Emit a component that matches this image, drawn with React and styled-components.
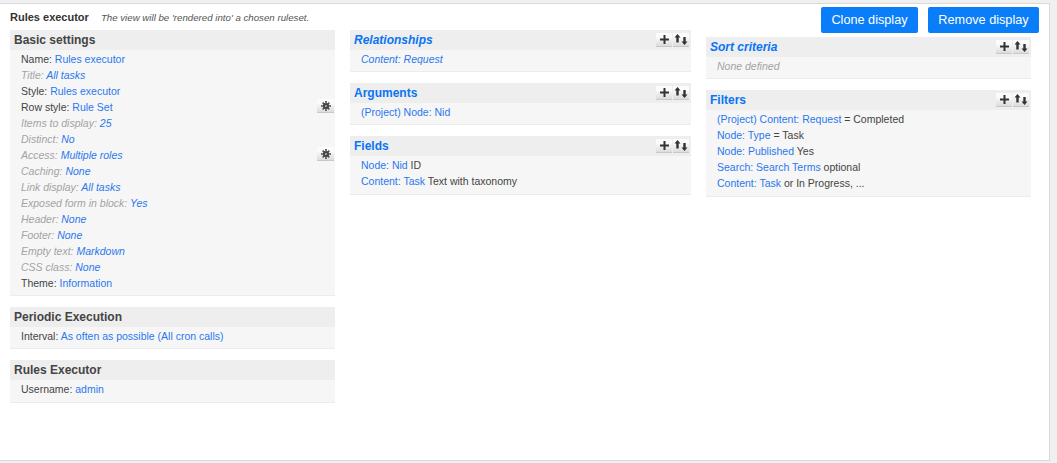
import React from 'react';
import styled, { createGlobalStyle } from 'styled-components';

const Global = createGlobalStyle`
  html, body { margin: 0; padding: 0; background: #f0f0f0; }
  body { font-family: "Liberation Sans", Arial, sans-serif; font-size: 10.5px; color: #444; -webkit-font-smoothing: antialiased; }
`;
const Page = styled.div`
  width: 1057px; height: 463px; box-sizing: border-box; padding: 3px 7px 2px 0; overflow: hidden;
`;
const Sheet = styled.div`
  height: 458px; box-sizing: border-box; background: #fff;
  border-top: 1px solid #d9d9d9; border-bottom: 1px solid #d9d9d9; border-right: 1px solid #d9d9d9;
  display: grid; grid-template-columns: 325px 341px 325px; column-gap: 15px;
  grid-template-rows: 26px 1fr; padding-left: 10px; align-content: start;
`;
const TitleRow = styled.div`
  grid-column: 1 / 3; grid-row: 1; display: flex; align-items: baseline; gap: 12px; padding-top: 7px;
`;
const ViewName = styled.strong`
  font-size: 11px; color: #333; line-height: 13px;
`;
const ViewNote = styled.em`
  font-size: 9.7px; color: #555; line-height: 13px;
`;
const Column = styled.div`
  display: flex; flex-direction: column; gap: 11px; grid-row: 2;
`;
const SideColumn = styled(Column)`
  grid-column: 3; grid-row: 1 / 3; gap: 11px;
`;
const Actions = styled.div`
  display: flex; justify-content: flex-end; gap: 10px; margin: 3px -8px -7px 0;
`;
const Action = styled.button`
  height: 26px; width: ${p => p.$w}px; border: 0; border-radius: 2px; background: #0a7df8; color: #fff;
  font: 12.7px "Liberation Sans", Arial, sans-serif; padding: 0;
`;
const Panel = styled.section`
  background: #f6f6f6; border-bottom: 1px solid #ececec; padding-bottom: ${p => p.$pb ?? 4}px;
`;
const PanelHead = styled.header`
  height: 20px; background: #eeeeee; display: flex; align-items: flex-start; padding: 0 2px 0 4px; justify-content: space-between;
`;
const PanelTitle = styled.h3`
  margin: 0; font-size: 12px; line-height: 20px; font-weight: bold;
  color: ${p => (p.$link ? '#0a74f5' : '#444')};
  font-style: ${p => (p.$italic ? 'italic' : 'normal')};
`;
const Tools = styled.div`
  display: flex; gap: 1px; margin-top: 3px;
`;
const Tool = styled.span`
  width: 16px; height: 13px; display: flex; align-items: center; justify-content: center;
  background: linear-gradient(#fbfbfb 30%, #dcdcdc); border-bottom: 1px solid #c8c8c8;
`;
const Rows = styled.div`
  padding: 1px 0 0 11px;
`;
const Row = styled.div`
  position: relative; height: 16px; line-height: 16px; white-space: nowrap;
  color: ${p => (p.$muted ? '#a3a3a3' : '#444')};
  font-style: ${p => (p.$muted ? 'italic' : 'normal')};
`;
const Link = styled.a`
  color: #2a78ee;
`;
const GearTool = styled(Tool)`
  position: absolute; right: 1px; top: 0; width: 17px;
`;

const Plus = () => (
  <svg width="9" height="9" viewBox="0 0 9 9"><path d="M3.5 0h2v3.5H9v2H5.5V9h-2V5.5H0v-2h3.5z" fill="#333" /></svg>
);
const Arrows = () => (
  <svg width="14" height="11" viewBox="0 0 14 11"><path d="M3.5 0l3 3.6H4.7V8.5H2.3V3.6H.5zM10.5 11L7.5 7.4h1.8V3h2.4v4.4h1.8z" fill="#333" /></svg>
);
const Gear = () => (
  <svg width="10" height="10" viewBox="0 0 11 11">
    <circle cx="5.5" cy="5.5" r="3.1" fill="#444" stroke="#444" strokeWidth="1" />
    <circle cx="5.5" cy="5.5" r="1.1" fill="#bbb" />
    <path d="M4.6 0h1.8v2H4.6zM4.6 9h1.8v2H4.6zM0 4.6h2v1.8H0zM9 4.6h2v1.8H9zM1.2 2.5l1.3-1.3 1.2 1.2-1.3 1.3zM7.3 8.6l1.3-1.3 1.2 1.2-1.3 1.3zM8.5 1.2l1.3 1.3-1.2 1.2-1.3-1.3zM2.4 7.3l1.3 1.3-1.2 1.2-1.3-1.3z" fill="#444" />
  </svg>
);
const ToolSet = () => (
  <Tools><Tool><Plus /></Tool><Tool><Arrows /></Tool></Tools>
);

const basic = [
  ['Name:', 'Rules executor'],
  ['Title:', 'All tasks', true],
  ['Style:', 'Rules executor'],
  ['Row style:', 'Rule Set', false, true],
  ['Items to display:', '25', true],
  ['Distinct:', 'No', true],
  ['Access:', 'Multiple roles', true, true],
  ['Caching:', 'None', true],
  ['Link display:', 'All tasks', true],
  ['Exposed form in block:', 'Yes', true],
  ['Header:', 'None', true],
  ['Footer:', 'None', true],
  ['Empty text:', 'Markdown', true],
  ['CSS class:', 'None', true],
  ['Theme:', 'Information'],
];

export default function App() {
  return (
    <Page>
      <Global />
      <Sheet>
        <TitleRow>
          <ViewName>Rules executor</ViewName>
          <ViewNote>The view will be 'rendered into' a chosen ruleset.</ViewNote>
        </TitleRow>
        <Column>
          <Panel>
            <PanelHead><PanelTitle>Basic settings</PanelTitle></PanelHead>
            <Rows>
              {basic.map(([label, value, muted, gear]) => (
                <Row key={label} $muted={muted}>
                  {label} <Link>{value}</Link>
                  {gear && <GearTool><Gear /></GearTool>}
                </Row>
              ))}
            </Rows>
          </Panel>
          <Panel>
            <PanelHead><PanelTitle>Periodic Execution</PanelTitle></PanelHead>
            <Rows><Row>Interval: <Link>As often as possible (All cron calls)</Link></Row></Rows>
          </Panel>
          <Panel $pb={5}>
            <PanelHead><PanelTitle>Rules Executor</PanelTitle></PanelHead>
            <Rows><Row>Username: <Link>admin</Link></Row></Rows>
          </Panel>
        </Column>
        <Column>
          <Panel>
            <PanelHead><PanelTitle $link $italic>Relationships</PanelTitle><ToolSet /></PanelHead>
            <Rows><Row><Link as="em">Content: Request</Link></Row></Rows>
          </Panel>
          <Panel>
            <PanelHead><PanelTitle $link>Arguments</PanelTitle><ToolSet /></PanelHead>
            <Rows><Row><Link>(Project) Node: Nid</Link></Row></Rows>
          </Panel>
          <Panel $pb={5}>
            <PanelHead><PanelTitle $link>Fields</PanelTitle><ToolSet /></PanelHead>
            <Rows>
              <Row><Link>Node: Nid</Link> ID</Row>
              <Row><Link>Content: Task</Link> Text with taxonomy</Row>
            </Rows>
          </Panel>
        </Column>
        <SideColumn>
          <Actions>
            <Action $w={97}>Clone display</Action>
            <Action $w={111}>Remove display</Action>
          </Actions>
          <Panel>
            <PanelHead><PanelTitle $link $italic>Sort criteria</PanelTitle><ToolSet /></PanelHead>
            <Rows><Row $muted>None defined</Row></Rows>
          </Panel>
          <Panel $pb={5}>
            <PanelHead><PanelTitle $link>Filters</PanelTitle><ToolSet /></PanelHead>
            <Rows>
              <Row><Link>(Project) Content: Request</Link> = Completed</Row>
              <Row><Link>Node: Type</Link> = Task</Row>
              <Row><Link>Node: Published</Link> Yes</Row>
              <Row><Link>Search: Search Terms</Link> optional</Row>
              <Row><Link>Content: Task</Link> or In Progress, ...</Row>
            </Rows>
          </Panel>
        </SideColumn>
      </Sheet>
    </Page>
  );
}
